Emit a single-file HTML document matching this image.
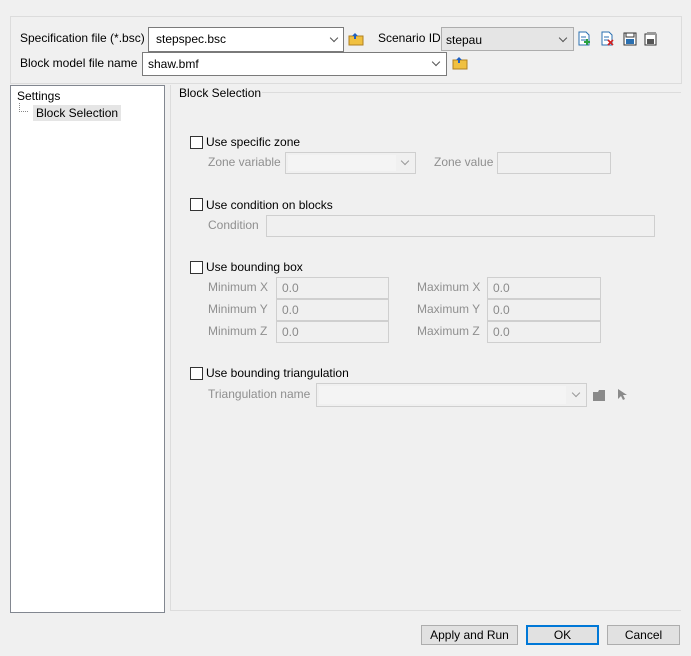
<!DOCTYPE html>
<html><head><style>
body{margin:0;width:691px;height:656px;background:#f0f0f0;font-family:"Liberation Sans",sans-serif;font-size:12px;color:#000;position:relative;overflow:hidden}
.a{position:absolute;white-space:nowrap}
.box{position:absolute;box-sizing:border-box;border:1px solid #7a7a7a;background:#fff}
.dis{position:absolute;box-sizing:border-box;border:1px solid #cfcfcf;background:#f0f0f0;color:#8a8a8a;padding:3px 0 0 5px}
.g{color:#8f8f8f}
.cb{position:absolute;width:11px;height:11px;border:1px solid #333;background:#fff}
.chev{position:absolute;width:5px;height:5px;border-right:1px solid #555;border-bottom:1px solid #555;transform:rotate(45deg)}
.btn{position:absolute;box-sizing:border-box;border:1px solid #adadad;background:#e1e1e1;text-align:center;line-height:18px;height:20px;top:625px}
</style></head><body>
<div class="a" style="left:10px;top:16px;width:670px;height:66px;border:1px solid #dcdcdc"></div>
<div class="a" style="left:20px;top:31px">Specification file (*.bsc)</div>
<div class="box" style="left:148px;top:27px;width:196px;height:25px"><span class="a" style="left:7px;top:4px">stepspec.bsc</span><div class="chev" style="left:182px;top:7px"></div></div>
<svg class="a" style="left:348px;top:32px" width="16" height="14"><rect x="1" y="4" width="14" height="9" fill="#f0c040" stroke="#b08020"/><path d="M7 1l-3 3h2v3h2V4h2z" fill="#2060c0"/></svg>
<div class="a" style="left:378px;top:31px">Scenario ID</div>
<div class="a" style="left:441px;top:27px;width:133px;height:24px;box-sizing:border-box;border:1px solid #adadad;background:#e5e5e5"><span class="a" style="left:4px;top:5px">stepau</span><div class="chev" style="left:118px;top:7px"></div></div>
<svg class="a" style="left:577px;top:31px" width="80" height="16"><path d="M2 1h7l3 3v10H2z" fill="#fff" stroke="#2a6fb0"/><path d="M4 6h5M4 9h5" stroke="#2a6fb0"/><path d="M10 8v6M7 11h6" stroke="#2aa040" stroke-width="2"/><path d="M25 1h7l3 3v10H25z" fill="#fff" stroke="#2a6fb0"/><path d="M27 6h5M27 9h5" stroke="#2a6fb0"/><path d="M31 9l5 5M36 9l-5 5" stroke="#d02020" stroke-width="1.6"/><rect x="47" y="2" width="12" height="12" fill="#fff" stroke="#333"/><rect x="49" y="2" width="8" height="4" fill="#fff" stroke="#333"/><rect x="49" y="8" width="8" height="5" fill="#2a6fb0"/><rect x="68" y="3" width="11" height="11" fill="#fff" stroke="#333"/><rect x="70" y="1" width="9" height="3" fill="#999"/><rect x="70" y="8" width="7" height="5" fill="#555"/></svg>
<div class="a" style="left:20px;top:56px">Block model file name</div>
<div class="box" style="left:142px;top:52px;width:305px;height:24px"><span class="a" style="left:5px;top:4px">shaw.bmf</span><div class="chev" style="left:290px;top:6px"></div></div>
<svg class="a" style="left:452px;top:56px" width="16" height="14"><rect x="1" y="4" width="14" height="9" fill="#f0c040" stroke="#b08020"/><path d="M7 1l-3 3h2v3h2V4h2z" fill="#2060c0"/></svg>

<div class="a" style="left:10px;top:85px;width:153px;height:526px;background:#fff;border:1px solid #828790"></div>
<div class="a" style="left:17px;top:89px">Settings</div>
<div class="a" style="left:19px;top:103px;width:8px;height:8px;border-left:1px dotted #888;border-bottom:1px dotted #888"></div>
<div class="a" style="left:33px;top:105px;background:#e5e5e5;padding:1px 3px">Block Selection</div>

<div class="a" style="left:170px;top:85px;width:1px;height:526px;background:#dcdcdc"></div>
<div class="a" style="left:170px;top:610px;width:511px;height:1px;background:#dcdcdc"></div>
<div class="a" style="left:262px;top:92px;width:419px;height:1px;background:#dcdcdc"></div>
<div class="a" style="left:179px;top:86px">Block Selection</div>

<div class="cb" style="left:190px;top:136px"></div><div class="a" style="left:206px;top:135px">Use specific zone</div>
<div class="a g" style="left:208px;top:155px">Zone variable</div>
<div class="dis" style="left:285px;top:152px;width:131px;height:22px"><div class="a" style="left:2px;top:2px;width:108px;height:16px;background:#f4f4f4"></div><div class="chev" style="left:116px;top:5px;border-color:#999"></div></div>
<div class="a g" style="left:434px;top:155px">Zone value</div>
<div class="dis" style="left:497px;top:152px;width:114px;height:22px"></div>

<div class="cb" style="left:190px;top:198px"></div><div class="a" style="left:206px;top:198px">Use condition on blocks</div>
<div class="a g" style="left:208px;top:218px">Condition</div>
<div class="dis" style="left:266px;top:215px;width:389px;height:22px"></div>

<div class="cb" style="left:190px;top:261px"></div><div class="a" style="left:206px;top:260px">Use bounding box</div>
<div class="a g" style="left:208px;top:280px">Minimum X</div><div class="dis" style="left:276px;top:277px;width:113px;height:22px">0.0</div>
<div class="a g" style="left:208px;top:302px">Minimum Y</div><div class="dis" style="left:276px;top:299px;width:113px;height:22px">0.0</div>
<div class="a g" style="left:208px;top:324px">Minimum Z</div><div class="dis" style="left:276px;top:321px;width:113px;height:22px">0.0</div>
<div class="a g" style="left:417px;top:280px">Maximum X</div><div class="dis" style="left:487px;top:277px;width:114px;height:22px">0.0</div>
<div class="a g" style="left:417px;top:302px">Maximum Y</div><div class="dis" style="left:487px;top:299px;width:114px;height:22px">0.0</div>
<div class="a g" style="left:417px;top:324px">Maximum Z</div><div class="dis" style="left:487px;top:321px;width:114px;height:22px">0.0</div>

<div class="cb" style="left:190px;top:367px"></div><div class="a" style="left:206px;top:366px">Use bounding triangulation</div>
<div class="a g" style="left:208px;top:387px">Triangulation name</div>
<div class="dis" style="left:316px;top:383px;width:271px;height:24px"><div class="a" style="left:2px;top:2px;width:247px;height:18px;background:#f4f4f4"></div><div class="chev" style="left:256px;top:6px;border-color:#999"></div></div>
<svg class="a" style="left:592px;top:388px" width="40" height="14"><path d="M1 4h5l1-2h6v11H1z" fill="#8a8a8a"/><path d="M26 1l0 10 3-3 2 4 2-1-2-4h4z" fill="#8a8a8a"/></svg>

<div class="btn" style="left:421px;width:97px">Apply and Run</div>
<div class="btn" style="left:526px;width:73px;border:2px solid #0078d7;line-height:16px">OK</div>
<div class="btn" style="left:607px;width:73px">Cancel</div>
</body></html>
